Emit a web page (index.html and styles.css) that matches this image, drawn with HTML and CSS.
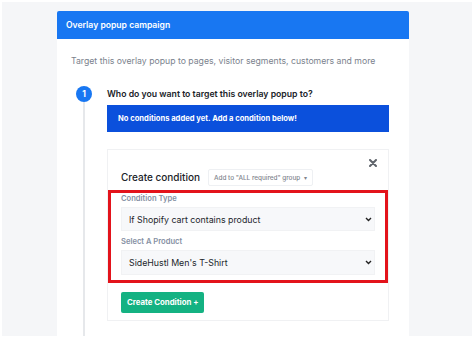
FILE: index.html
```html
<!doctype html>
<html lang="en">
    <head>
        <meta charset="utf-8">
        <title>Overlay popup campaign</title>
        <meta name="viewport" content="width=device-width, initial-scale=1">
        <link rel="stylesheet" href="styles.css">
    </head>
    <body>
        <div class="panel">
            <div class="panel-head">Overlay popup campaign</div>
            <div class="panel-body">
                <p class="lead">Target this overlay popup to pages, visitor segments, customers and more</p>
                <div class="step">
                    <div class="rail">
                        <div class="num">1</div>
                        <div class="line"></div>
                    </div>
                    <div class="step-main">
                        <div class="question">Who do you want to target this overlay popup to?</div>
                        <div class="notice">No conditions added yet. Add a condition below!</div>
                        <div class="cond">
                            <div class="cond-close">
                                <svg width="8" height="8" viewBox="0 0 8 8"><path d="M1 1 L7 7 M7 1 L1 7" stroke="#5f646b" stroke-width="2" stroke-linecap="round"/></svg>
                            </div>
                            <div class="cond-title">
                                <span class="title">Create condition</span>
                                <span class="group-btn">Add to "ALL required" group <span class="caret">&#9662;</span></span>
                            </div>
                            <div class="highlight">
                                <div class="field-label">Condition Type</div>
                                <div class="select">
                                    <span>If Shopify cart contains product</span>
                                    <svg width="7" height="5" viewBox="0 0 7 5"><path d="M1 1 L3.5 3.5 L6 1" fill="none" stroke="#222" stroke-width="1.4"/></svg>
                                </div>
                                <div class="field-label second">Select A Product</div>
                                <div class="select">
                                    <span>SideHustl Men's T-Shirt</span>
                                    <svg width="7" height="5" viewBox="0 0 7 5"><path d="M1 1 L3.5 3.5 L6 1" fill="none" stroke="#222" stroke-width="1.4"/></svg>
                                </div>
                            </div>
                            <div class="btn-green">Create Condition +</div>
                        </div>
                    </div>
                </div>
            </div>
        </div>
    </body>
</html>
```

FILE: styles.css
```css
html {
    background: #ffffff;
    height: 100%;
    overflow: hidden;
}
body {
    margin: 2px;
    height: 334px;
    overflow: hidden;
    background: #f5f6f8;
    font-family: Inter, "Noto Sans", sans-serif;
    color: #1f2328;
}
.panel {
    margin: 9px 0 0 55px;
    width: 352px;
}
.panel-head {
    height: 28px;
    line-height: 28px;
    padding-left: 9px;
    background: #1877f2;
    color: white;
    font-size: 8.6px;
    font-weight: 600;
    border-radius: 2px 2px 0 0;
}
.panel-body {
    background: white;
    padding: 15px 0 0 14px;
    height: 290px;
}
.lead {
    margin: 0;
    font-size: 8.7px;
    line-height: 14px;
    color: #7b828d;
}
.step {
    display: flex;
    margin-top: 18px;
}
.rail {
    width: 36px;
    display: flex;
    flex-direction: column;
    padding-left: 5px;
    box-sizing: border-box;
}
.num {
    width: 16px;
    height: 16px;
    border-radius: 50%;
    background: #1877f2;
    color: white;
    font-size: 8.5px;
    font-weight: 700;
    text-align: center;
    line-height: 16px;
}
.line {
    width: 2px;
    margin-left: 7px;
    height: 240px;
    background: #e6e8eb;
}
.step-main {
    width: 282px;
}
.question {
    margin-top: 2px;
    font-size: 8.7px;
    font-weight: 600;
    line-height: 12px;
    color: #202328;
}
.notice {
    margin-top: 5px;
    height: 27px;
    line-height: 27px;
    padding-left: 11px;
    background: #0b50dc;
    color: white;
    font-size: 7.6px;
    font-weight: 700;
}
.cond {
    margin-top: 17px;
    border: 1px solid #f0f1f3;
    padding: 7px 0 7px 0;
    background: white;
}
.cond-close {
    height: 12px;
    display: flex;
    justify-content: flex-end;
    align-items: center;
    padding-right: 11px;
}
.cond-title {
    height: 16px;
    display: flex;
    align-items: center;
    padding-left: 13px;
}
.title {
    font-size: 10px;
    font-weight: 500;
    color: #202328;
}
.group-btn {
    margin-left: 8px;
    height: 15px;
    line-height: 15px;
    padding: 0 5px;
    border: 1px solid #eef0f3;
    border-radius: 2px;
    font-size: 6.4px;
    font-weight: 500;
    color: #7f858d;
}
.caret {
    font-size: 6px;
    margin-left: 2px;
}
.highlight {
    margin-top: 5px;
    border: 3px solid #e3131b;
    padding: 0 10px 5px 10px;
}
.field-label {
    font-size: 7.6px;
    font-weight: 600;
    line-height: 12px;
    color: #8590a3;
}
.field-label.second {
    margin-top: 5px;
}
.select {
    margin-top: 2px;
    height: 24px;
    display: flex;
    align-items: center;
    justify-content: space-between;
    padding: 0 2px 0 7px;
    background: #f7f8fa;
    border: 1px solid #f1f2f4;
    box-sizing: border-box;
    font-size: 8.8px;
    color: #22252a;
}
.select + .field-label + .select {
    height: 25px;
}
.btn-green {
    display: inline-block;
    margin: 9px 0 0 13px;
    height: 21px;
    line-height: 21px;
    padding: 0 6px;
    background: #14b282;
    border-radius: 2px;
    color: white;
    font-size: 7.8px;
    font-weight: 700;
}
```
